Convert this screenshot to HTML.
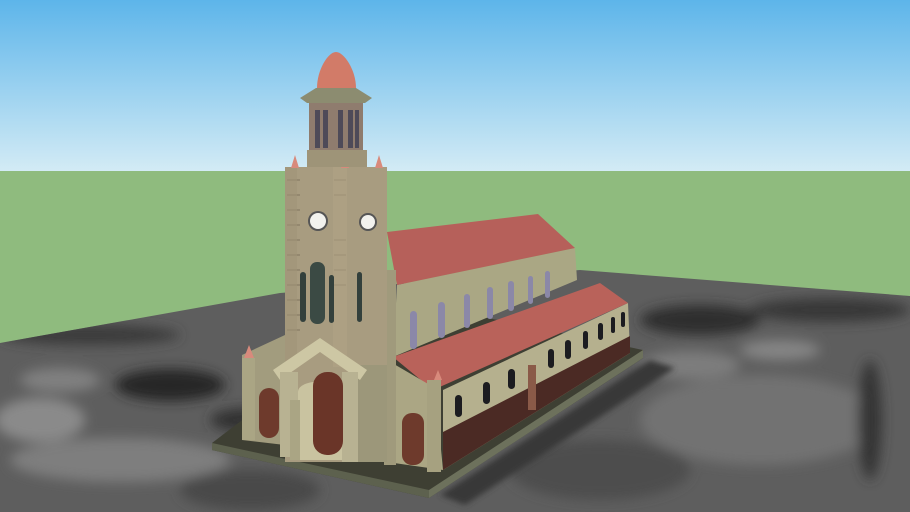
<!DOCTYPE html>
<html><head><meta charset="utf-8"><style>
html,body{margin:0;padding:0;width:910px;height:512px;overflow:hidden;background:#8fbb7e}
</style></head><body>
<svg width="910" height="512" viewBox="0 0 910 512" xmlns="http://www.w3.org/2000/svg">
<defs>
<linearGradient id="sky" x1="0" y1="0" x2="0" y2="1">
<stop offset="0" stop-color="#5db5ea"/><stop offset="1" stop-color="#d3ebf5"/>
</linearGradient>
<filter id="bl" x="-20%" y="-20%" width="140%" height="140%"><feGaussianBlur stdDeviation="6"/></filter>
<filter id="bl2"><feGaussianBlur stdDeviation="3"/></filter>
<clipPath id="ter"><polygon points="0,343 280,293 580,270 910,296 910,512 0,512"/></clipPath>
</defs>
<rect width="910" height="171" fill="url(#sky)"/>
<rect y="171" width="910" height="341" fill="#8fbb7e"/>
<polygon points="0,343 280,293 580,270 910,296 910,512 0,512" fill="#5e5e5e"/>
<g clip-path="url(#ter)" filter="url(#bl)">
<ellipse cx="170" cy="385" rx="55" ry="16" fill="#262626"/>
<ellipse cx="90" cy="335" rx="90" ry="10" fill="#3a3a3a"/>
<ellipse cx="120" cy="460" rx="110" ry="22" fill="#7e7e7e"/>
<ellipse cx="40" cy="420" rx="45" ry="22" fill="#8a8a8a"/>
<ellipse cx="250" cy="420" rx="40" ry="12" fill="#333"/>
<ellipse cx="700" cy="320" rx="60" ry="15" fill="#2e2e2e"/>
<ellipse cx="830" cy="310" rx="80" ry="12" fill="#383838"/>
<ellipse cx="760" cy="420" rx="120" ry="45" fill="#727272"/>
<ellipse cx="600" cy="470" rx="90" ry="30" fill="#4e4e4e"/>
<ellipse cx="870" cy="420" rx="12" ry="60" fill="#343434"/>
<ellipse cx="250" cy="490" rx="70" ry="20" fill="#4a4a4a"/>
<ellipse cx="690" cy="365" rx="50" ry="14" fill="#7d7d7d"/>
<ellipse cx="780" cy="350" rx="40" ry="10" fill="#858585"/>
<ellipse cx="60" cy="380" rx="40" ry="12" fill="#808080"/>
</g>
<!-- shadow -->
<polygon points="440,495 650,360 675,368 465,505" fill="#383838" filter="url(#bl2)"/>
<!-- platform -->
<polygon points="212,443 400,300 643,350 643,358 429,498 212,450" fill="#3e3f33"/>
<polygon points="429,490 643,350 643,358 429,498" fill="#6d715c"/>
<polygon points="212,443 429,490 429,498 212,450" fill="#5d614e"/>
<!-- aisle wall -->
<polygon points="443,390 628,303 630,353 443,470" fill="#b5b08e"/>
<polygon points="443,432 630,336 630,353 443,470" fill="#4b2a24"/>
<g fill="#1c1c20">
<rect x="455" y="395" width="7" height="22" rx="3.5"/><rect x="483" y="382" width="7" height="22" rx="3.5"/>
<rect x="508" y="369" width="7" height="20" rx="3.5"/><rect x="548" y="349" width="6" height="19" rx="3"/>
<rect x="565" y="340" width="6" height="19" rx="3"/><rect x="583" y="331" width="5" height="18" rx="2.5"/>
<rect x="598" y="323" width="5" height="17" rx="2.5"/><rect x="611" y="317" width="4" height="16" rx="2"/>
<rect x="621" y="312" width="4" height="15" rx="2"/>
</g>
<rect x="528" y="365" width="8" height="45" fill="#8a5a48"/>
<!-- clerestory wall -->
<polygon points="397,285 575,248 577,280 393,357" fill="#aaa784"/>
<g fill="#8b88a8">
<rect x="410" y="311" width="7" height="38" rx="3.5"/><rect x="438" y="302" width="7" height="36" rx="3.5"/>
<rect x="464" y="294" width="6" height="34" rx="3"/><rect x="487" y="287" width="6" height="32" rx="3"/>
<rect x="508" y="281" width="6" height="30" rx="3"/><rect x="528" y="276" width="5" height="28" rx="2.5"/>
<rect x="545" y="271" width="5" height="27" rx="2.5"/>
</g>
<!-- upper roof -->
<polygon points="387,232 538,214 575,248 397,285" fill="#b6605a"/>
<!-- aisle roof -->
<polygon points="393,357 600,283 628,303 433,390" fill="#b9625a"/>
<!-- right transept front -->
<polygon points="387,360 435,388 443,470 387,462" fill="#aba684"/>
<rect x="402" y="413" width="22" height="52" rx="10" fill="#6e3a2c"/>
<rect x="384" y="270" width="12" height="195" fill="#a09a7c"/>
<rect x="427" y="380" width="14" height="92" fill="#a6a180"/>
<polygon points="434,380 438,370 442,380" fill="#d88a7c"/>
<!-- left facade -->
<polygon points="242,355 285,335 285,445 242,440" fill="#a29c7e"/>
<rect x="259" y="388" width="20" height="50" rx="10" fill="#6e3a2c"/>
<rect x="242" y="358" width="13" height="82" fill="#aaa584"/>
<polygon points="244,358 249,345 254,358" fill="#d88a7c"/>
<!-- tower -->
<rect x="285" y="167" width="102" height="295" fill="#a89c80"/>
<rect x="358" y="365" width="29" height="97" fill="#9c977a"/>
<g stroke="#8a7e66" stroke-width="1.3">
<line x1="287" y1="180" x2="300" y2="180"/><line x1="287" y1="195" x2="300" y2="195"/><line x1="287" y1="210" x2="300" y2="210"/>
<line x1="287" y1="225" x2="300" y2="225"/><line x1="287" y1="240" x2="300" y2="240"/><line x1="287" y1="255" x2="300" y2="255"/>
<line x1="287" y1="270" x2="300" y2="270"/><line x1="287" y1="285" x2="300" y2="285"/><line x1="287" y1="300" x2="300" y2="300"/>
<line x1="287" y1="315" x2="300" y2="315"/><line x1="287" y1="330" x2="300" y2="330"/>
<line x1="334" y1="180" x2="346" y2="180"/><line x1="334" y1="195" x2="346" y2="195"/><line x1="334" y1="240" x2="346" y2="240"/>
<line x1="334" y1="255" x2="346" y2="255"/><line x1="334" y1="270" x2="346" y2="270"/><line x1="334" y1="285" x2="346" y2="285"/>
</g>
<rect x="285" y="167" width="12" height="200" fill="#a09478" opacity=".6"/>
<rect x="333" y="167" width="14" height="200" fill="#b0a486" opacity=".6"/>
<polygon points="291,168 295,155 299,168" fill="#d88a7c"/>
<polygon points="341,168 345,155 349,168" fill="#d88a7c"/>
<polygon points="375,168 379,155 383,168" fill="#d88a7c"/>
<circle cx="318" cy="221" r="10" fill="#555"/><circle cx="318" cy="221" r="8" fill="#f2f2ee"/>
<circle cx="368" cy="222" r="9" fill="#555"/><circle cx="368" cy="222" r="7" fill="#f2f2ee"/>
<rect x="310" y="262" width="15" height="62" rx="7" fill="#3b4a44"/>
<rect x="300" y="272" width="6" height="50" rx="3" fill="#33403c"/>
<rect x="329" y="275" width="5" height="48" rx="2.5" fill="#33403c"/>
<rect x="357" y="272" width="5" height="50" rx="2.5" fill="#33403c"/>
<!-- lantern -->
<rect x="307" y="150" width="60" height="17" fill="#9e9478"/>
<rect x="309" y="103" width="54" height="47" fill="#8f7c6e"/>
<g fill="#4e4a58"><rect x="315" y="110" width="5" height="38"/><rect x="323" y="110" width="5" height="38"/>
<rect x="338" y="110" width="5" height="38"/><rect x="348" y="110" width="5" height="38"/><rect x="355" y="110" width="4" height="38"/></g>
<polygon points="300,98 316,88 356,88 372,98 365,103 307,103" fill="#8c8c70"/>
<path d="M317,88 C317,70 328,52 336,52 C344,52 356,70 356,88 Z" fill="#d27b68"/>
<!-- portal -->
<polygon points="273,370 320,338 367,370 360,380 320,352 280,380" fill="#cdc7a4"/>
<rect x="280" y="372" width="18" height="85" fill="#b8b292"/>
<rect x="342" y="372" width="16" height="90" fill="#b8b292"/>
<path d="M298,460 V392 C298,378 342,378 342,392 V460 Z" fill="#c9c3a0"/>
<rect x="313" y="372" width="30" height="83" rx="14" fill="#6a3528"/>
<rect x="290" y="400" width="10" height="60" fill="#aaa584"/>
</svg>
</body></html>
